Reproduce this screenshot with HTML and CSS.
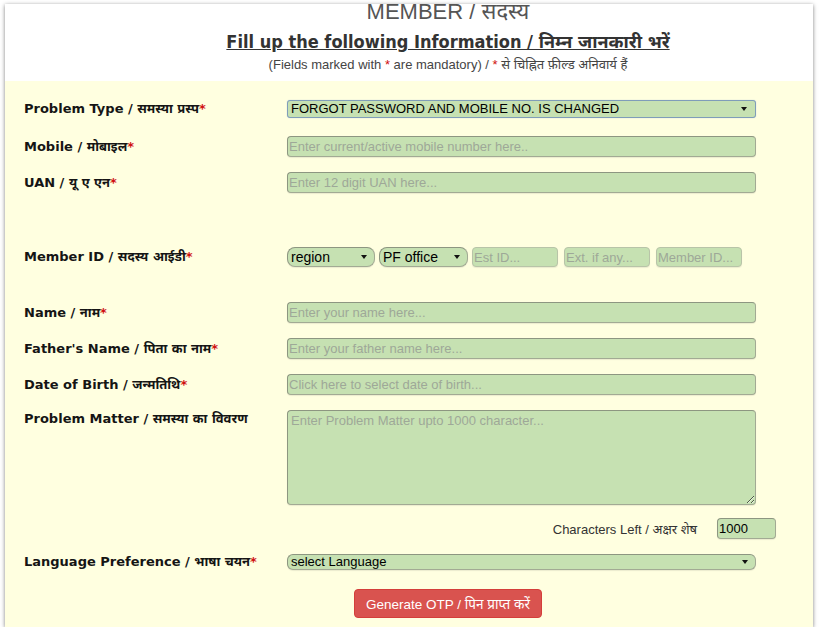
FILE: index.html
```html
<!DOCTYPE html>
<html lang="en">
<head>
<meta charset="utf-8">
<title>Member</title>
<link rel="stylesheet" href="styles.css">
</head>
<body>
<div class="card">
  <div class="head">
    <div class="title">MEMBER / सदस्य</div>
    <div class="heading">Fill up the following Information / निम्न जानकारी भरें</div>
    <div class="note">(Fields marked with <span class="req">*</span> are mandatory) / <span class="req">*</span> से चिह्नित फ़ील्ड अनिवार्य हैं</div>
  </div>
  <form class="form">
    <div class="row gap18">
      <label class="lbl">Problem Type / समस्या प्रस्प<span class="req">*</span></label>
      <div class="sel sel-main"><select class="ctl ctl-sel focus"><option>FORGOT PASSWORD AND MOBILE NO. IS CHANGED</option></select></div>
    </div>
    <div class="row gap15">
      <label class="lbl">Mobile / मोबाइल<span class="req">*</span></label>
      <input class="ctl" type="text" placeholder="Enter current/active mobile number here..">
    </div>
    <div class="row gap54">
      <label class="lbl">UAN / यू ए एन<span class="req">*</span></label>
      <input class="ctl" type="text" placeholder="Enter 12 digit UAN here...">
    </div>
    <div class="row gap35">
      <label class="lbl">Member ID / सदस्य आईडी<span class="req">*</span></label>
      <div class="mid-row">
        <div class="sel sel-pill w88"><select class="ctl ctl-sel pill"><option>region</option></select></div>
        <div class="sel sel-pill w89"><select class="ctl ctl-sel pill"><option>PF office</option></select></div>
        <input class="ctl small" type="text" placeholder="Est ID...">
        <input class="ctl small wide-gap" type="text" placeholder="Ext. if any...">
        <input class="ctl small wide-gap" type="text" placeholder="Member ID...">
      </div>
    </div>
    <div class="row gap15">
      <label class="lbl">Name / नाम<span class="req">*</span></label>
      <input class="ctl" type="text" placeholder="Enter your name here...">
    </div>
    <div class="row gap15">
      <label class="lbl">Father's Name / पिता का नाम<span class="req">*</span></label>
      <input class="ctl" type="text" placeholder="Enter your father name here...">
    </div>
    <div class="row gap15">
      <label class="lbl">Date of Birth / जन्मतिथि<span class="req">*</span></label>
      <input class="ctl" type="text" placeholder="Click here to select date of birth...">
    </div>
    <div class="row row-top gap13">
      <label class="lbl lbl-top">Problem Matter / समस्या का विवरण</label>
      <textarea class="ctl area" placeholder="Enter Problem Matter upto 1000 character..."></textarea>
    </div>
    <div class="chars gap15">
      <span class="chars-text">Characters Left / अक्षर शेष</span>
      <input class="ctl count" type="text" value="1000">
    </div>
    <div class="row gap19">
      <label class="lbl">Language Preference / भाषा चयन<span class="req">*</span></label>
      <div class="sel sel-lang"><select class="ctl ctl-sel lang"><option>select Language</option></select></div>
    </div>
    <div class="actions">
      <button class="btn" type="button">Generate OTP / पिन प्राप्त करें</button>
    </div>
  </form>
</div>
</body>
</html>
```
FILE: styles.css
```css
html, body {
  margin: 0;
  padding: 0;
  background: #ffffff;
}

.card {
  margin: 4px 0 0 5px;
  width: 808px;
  height: 623px;
  box-shadow: 0 1px 4px rgba(0, 0, 0, 0.5);
  overflow: hidden;
  background: #ffffe0;
}

.head {
  display: flow-root;
  height: 77px;
  box-sizing: border-box;
  background: #ffffff;
  padding-left: 78px;
  text-align: center;
  font-family: "Liberation Sans", "Noto Sans", "Noto Sans Devanagari", sans-serif;
}

.title {
  margin-top: -3px;
  font-size: 22px;
  line-height: 22px;
  color: #555555;
}

.heading {
  margin-top: 8px;
  font-family: "DejaVu Sans Condensed", "DejaVu Sans", "Noto Sans", sans-serif;
  font-stretch: condensed;
  font-weight: bold;
  font-size: 18px;
  line-height: 22px;
  color: #333333;
  text-decoration: underline;
}

.note {
  margin-top: 4px;
  font-size: 13px;
  line-height: 16px;
  color: #444444;
}

.req {
  color: #d01010;
}

.form {
  margin: 0;
  padding: 19px 0 0 0;
  font-family: "Liberation Sans", "Noto Sans", "Noto Sans Devanagari", sans-serif;
}

.row {
  display: grid;
  grid-template-columns: 282px 469px;
  align-items: center;
}

.row-top {
  align-items: start;
}

.gap13 { margin-bottom: 13px; }
.gap15 { margin-bottom: 15px; }
.gap18 { margin-bottom: 18px; }
.gap19 { margin-bottom: 19px; }
.gap35 { margin-bottom: 35px; }
.gap54 { margin-bottom: 54px; }

.lbl {
  padding-left: 19px;
  font-family: "DejaVu Sans", "Noto Sans", "Noto Sans Devanagari", sans-serif;
  font-weight: bold;
  font-size: 13px;
  line-height: 16px;
  color: #151515;
}

.lbl-top {
  padding-top: 1px;
}

.ctl {
  display: block;
  width: 100%;
  height: 21px;
  box-sizing: border-box;
  margin: 0;
  padding: 0 1px;
  border: 1px solid #a2aa94;
  border-top-color: #8d9681;
  border-left-color: #8d9681;
  border-radius: 4px;
  background: #c6e1b2;
  box-shadow: 0 1px 1px rgba(0, 0, 0, 0.08);
  font-family: "Liberation Sans", "Noto Sans", sans-serif;
  font-size: 13px;
  color: #000000;
  outline: none;
}

.ctl::placeholder {
  color: #9ea898;
  opacity: 1;
}

.ctl-sel {
  -webkit-appearance: none;
  appearance: none;
  padding: 0 3px;
}

.sel {
  position: relative;
}

.sel::after {
  content: "";
  position: absolute;
  right: 7px;
  top: 50%;
  margin-top: -2px;
  border-left: 3px solid transparent;
  border-right: 3px solid transparent;
  border-top: 4px solid #111111;
}

.sel-main .ctl {
  height: 18px;
  border: 1px solid #7f9db9;
  border-radius: 3px;
  box-shadow: 0 0 1px #9fb8d0;
  line-height: 16px;
}

.sel-main::after {
  right: 9px;
}

.mid-row {
  display: flex;
  gap: 4px;
}

.w88 { width: 88px; }
.w89 { width: 89px; }

.pill {
  height: 20px;
  border-radius: 8px;
  font-size: 14px;
}

.sel-pill::after {
  right: 8px;
}

.small {
  width: 86px;
  height: 20px;
  border-color: #b8c4a8;
  font-size: 13px;
}

.wide-gap {
  margin-left: 2px;
}

.area {
  height: 95px;
  padding: 2px 3px;
  resize: vertical;
  font-size: 13px;
}

.chars {
  display: flex;
  justify-content: flex-end;
  align-items: center;
  gap: 20px;
  padding-right: 37px;
}

.chars-text {
  font-size: 13px;
  color: #333333;
}

.count {
  width: 59px;
  font-size: 13px;
}

.sel-lang .ctl {
  height: 16px;
  border-radius: 6px;
  line-height: 14px;
  font-size: 13px;
}

.sel-lang::after {
  right: 8px;
}

.actions {
  display: flex;
  justify-content: center;
  padding-left: 78px;
}

.btn {
  width: 188px;
  height: 29px;
  border: 1px solid #d43f3a;
  border-radius: 4px;
  background: #d9534f;
  color: #ffffff;
  font-family: "Liberation Sans", "Noto Sans", "Noto Sans Devanagari", sans-serif;
  font-size: 13.5px;
  padding: 0;
}
```
